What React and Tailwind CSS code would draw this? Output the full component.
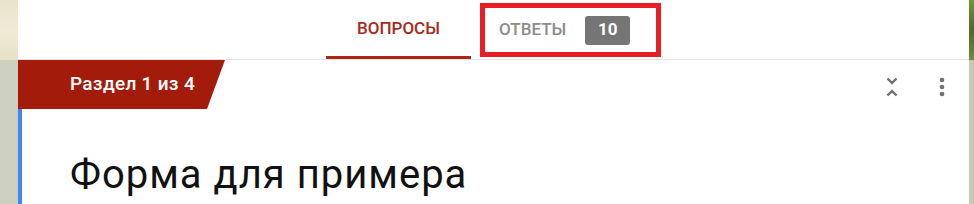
export default function App() {
  return (
    <div className="flex h-[204px] w-[974px] overflow-hidden bg-white" style={{ fontFamily: "Roboto, 'Noto Sans', sans-serif" }}>
      <div className="flex w-[18px] shrink-0 flex-col">
        <div className="h-[60px] bg-gradient-to-b from-[#e9e4c8] via-[#efebd6] to-[#e6e1c6]" />
        <div className="flex-1 bg-[#cdcfbf]" />
      </div>
      <div className="flex min-w-0 flex-1 flex-col">
        <div className="flex h-[60px] shrink-0 items-start border-b border-[#e3e3e3] pl-[308px]">
          <div className="flex h-[59px] w-[145px] flex-col items-center">
            <div className="flex flex-1 items-center pt-[1px] text-[17px] font-medium text-[#a8291a]">ВОПРОСЫ</div>
            <div className="h-[3px] w-full bg-[#a8291a]" />
          </div>
          <div className="ml-[9px] mt-[3px] flex h-[54px] w-[181px] items-center border-[5px] border-[#ea1c24] pl-[14px]">
            <span className="text-[17px] font-medium text-[#8c8c8c]">ОТВЕТЫ</span>
            <span className="ml-[19px] flex h-[29px] w-[45px] items-center justify-center rounded-[3px] bg-[#757575] text-[17px] font-bold text-white">10</span>
          </div>
        </div>
        <div className="flex h-[49px] shrink-0 items-center">
          <div
            className="flex h-full w-[207px] items-center bg-[#a31c0b] pl-[52px] text-[19px] font-medium tracking-[0.3px] text-white"
            style={{ clipPath: "polygon(0 0, 100% 0, calc(100% - 18px) 100%, 0 100%)" }}
          >
            Раздел 1 из 4
          </div>
          <div className="ml-auto flex items-center gap-[22px] pr-[13px] pt-[5px] text-[#727272]">
            <svg width="28" height="28" viewBox="0 0 24 24" fill="currentColor">
              <path d="M7.41 18.59L8.83 20 12 16.83 15.17 20l1.41-1.41L12 14l-4.59 4.59zm9.18-13.18L15.17 4 12 7.17 8.83 4 7.41 5.41 12 10l4.59-4.59z" />
            </svg>
            <svg width="28" height="28" viewBox="0 0 24 24" fill="currentColor">
              <circle cx="12" cy="6" r="2" />
              <circle cx="12" cy="12" r="2" />
              <circle cx="12" cy="18" r="2" />
            </svg>
          </div>
        </div>
        <div className="flex-1 border-l-4 border-[#4285f4] pl-[48px] pt-[46px]">
          <div className="text-[40px] leading-[40px] tracking-[1px] text-[#111]">Форма для примера</div>
        </div>
      </div>
      <div className="flex w-[5px] shrink-0 flex-col">
        <div className="h-[60px] bg-gradient-to-b from-[#6f9440] via-[#4f6a2e] to-[#6b8c3c]" />
        <div className="flex-1 bg-[#c7c8b6]" />
      </div>
    </div>
  );
}
